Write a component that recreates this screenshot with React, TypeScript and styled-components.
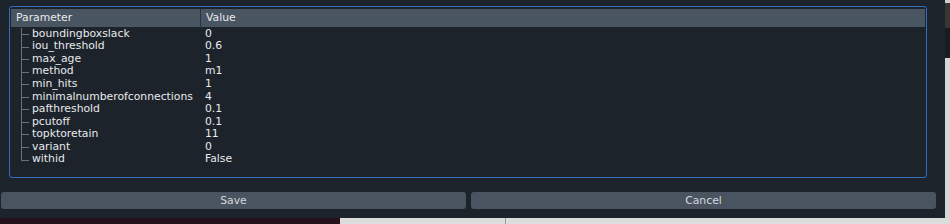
import React from "react";
import styled, { createGlobalStyle } from "styled-components";

const Global = createGlobalStyle`
  html, body { margin: 0; padding: 0; background: #d9d9d9; }
  body { font-family: "DejaVu Sans", "Liberation Sans", sans-serif; }
`;

const Screen = styled.div`
  width: 950px;
  height: 224px;
  display: flex;
  flex-direction: column;
  overflow: hidden;
`;

const TopArea = styled.div`
  display: flex;
  height: 218px;
`;

const Dialog = styled.div`
  width: 945px;
  height: 218px;
  background: #1d232b;
  box-sizing: border-box;
  padding: 6px 18px 0 9px;
  display: flex;
  flex-direction: column;
`;

const SideStrip = styled.div`
  flex: 1;
  display: flex;
  flex-direction: column;
`;

const StripPart = styled.div<{ $h?: number; $c: string }>`
  height: ${(p) => (p.$h ? `${p.$h}px` : "auto")};
  flex: ${(p) => (p.$h ? "none" : "1")};
  background: ${(p) => p.$c};
`;

const BottomStrip = styled.div`
  flex: 1;
  display: flex;
`;

const BottomDark = styled.div`
  width: 340px;
  background: #25101c;
`;

const BottomLight = styled.div`
  flex: 1;
  background: #dcdcdc;
  display: flex;
`;

const BottomDivider = styled.div`
  margin-left: 165px;
  width: 1px;
  background: #9a9a9a;
`;

const Frame = styled.div`
  height: 172px;
  box-sizing: border-box;
  border: 1px solid #3370bb;
  border-radius: 3px;
  padding: 2px 1px 0 1px;
`;

const Header = styled.div`
  height: 18px;
  display: flex;
  background: #4a5562;
  color: #e8eaec;
  font-size: 10.8px;
  line-height: 18px;
`;

const HeaderCell = styled.div<{ $w?: number }>`
  width: ${(p) => (p.$w ? `${p.$w}px` : "auto")};
  flex: ${(p) => (p.$w ? "none" : "1")};
  box-sizing: border-box;
  padding-left: 5px;
  border-right: ${(p) => (p.$w ? "1px solid #2c333c" : "none")};
`;

const Rows = styled.div`
  padding-top: 0.7px;
`;

const Row = styled.div`
  height: 12.57px;
  display: flex;
  align-items: center;
  color: #e8eaec;
  font-size: 10.8px;
  line-height: 12.57px;
  white-space: nowrap;
`;

const Branch = styled.div<{ $last?: boolean }>`
  position: relative;
  width: 21px;
  height: 100%;
  flex: none;
  &::before {
    content: "";
    position: absolute;
    left: 10px;
    top: 0;
    width: 1px;
    height: ${(p) => (p.$last ? "50%" : "100%")};
    background: #6b7178;
  }
  &::after {
    content: "";
    position: absolute;
    left: 10px;
    top: 50%;
    width: 8px;
    height: 1px;
    background: #6b7178;
  }
`;

const NameCell = styled.div`
  width: 173px;
  flex: none;
`;

const ValueCell = styled.div`
  flex: 1;
`;

const Buttons = styled.div`
  margin-top: 14px;
  margin-left: -8px;
  margin-right: -9px;
  display: flex;
  gap: 5px;
`;

const Button = styled.button`
  flex: 1;
  height: 17px;
  border: none;
  border-radius: 3px;
  background: #4a5461;
  color: #d4d7da;
  font-family: "DejaVu Sans", "Liberation Sans", sans-serif;
  font-size: 10.8px;
  padding: 0;
  line-height: 17px;
`;

const params: [string, string][] = [
  ["boundingboxslack", "0"],
  ["iou_threshold", "0.6"],
  ["max_age", "1"],
  ["method", "m1"],
  ["min_hits", "1"],
  ["minimalnumberofconnections", "4"],
  ["pafthreshold", "0.1"],
  ["pcutoff", "0.1"],
  ["topktoretain", "11"],
  ["variant", "0"],
  ["withid", "False"],
];

export default function App() {
  return (
    <>
      <Global />
      <Screen>
        <TopArea>
          <Dialog>
            <Frame>
              <Header>
                <HeaderCell $w={190}>Parameter</HeaderCell>
                <HeaderCell>Value</HeaderCell>
              </Header>
              <Rows>
                {params.map(([k, v], i) => (
                  <Row key={k}>
                    <Branch $last={i === params.length - 1} />
                    <NameCell>{k}</NameCell>
                    <ValueCell>{v}</ValueCell>
                  </Row>
                ))}
              </Rows>
            </Frame>
            <Buttons>
              <Button>Save</Button>
              <Button>Cancel</Button>
            </Buttons>
          </Dialog>
          <SideStrip>
            <StripPart $h={3} $c="#cfcfcf" />
            <StripPart $h={25} $c="#3b3534" />
            <StripPart $h={30} $c="#191d22" />
            <StripPart $c="#d6d6d6" />
          </SideStrip>
        </TopArea>
        <BottomStrip>
          <BottomDark />
          <BottomLight>
            <BottomDivider />
          </BottomLight>
        </BottomStrip>
      </Screen>
    </>
  );
}
